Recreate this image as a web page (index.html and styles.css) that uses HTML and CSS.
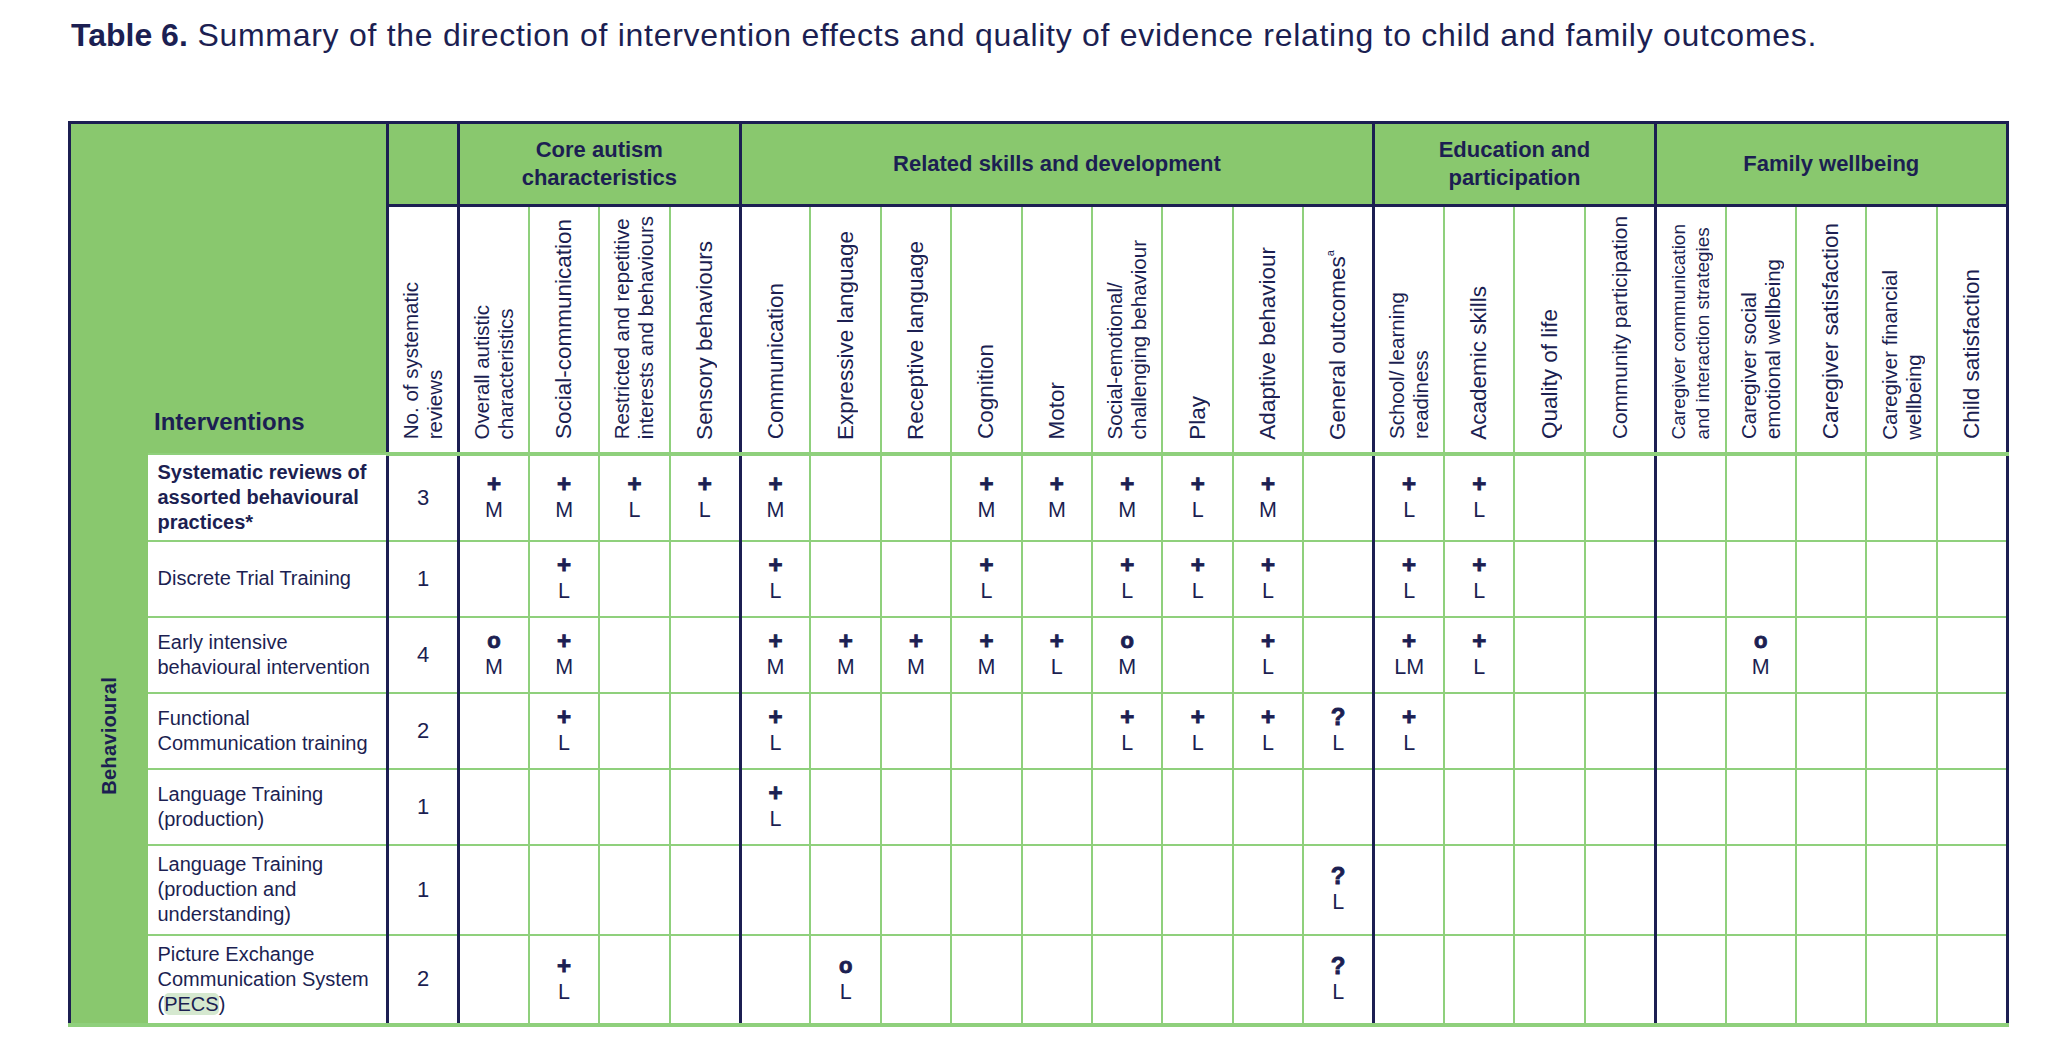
FILE: index.html
```html
<!DOCTYPE html>
<html lang="en">
<head>
<meta charset="utf-8">
<title>Table 6</title>
<link rel="stylesheet" href="styles.css">
</head>
<body>
<div class="page">
  <h1 class="title"><b>Table 6.</b> Summary of the direction of intervention effects and quality of evidence relating to child and family outcomes.</h1>

  <table class="summary">
    <colgroup>
      <col class="c-cat"><col class="c-name"><col class="c-no">
      <col class="c-d"><col class="c-d"><col class="c-d"><col class="c-d">
      <col class="c-d"><col class="c-d"><col class="c-d"><col class="c-d"><col class="c-d"><col class="c-d"><col class="c-d"><col class="c-d"><col class="c-d">
      <col class="c-d"><col class="c-d"><col class="c-d"><col class="c-d">
      <col class="c-d"><col class="c-d"><col class="c-d"><col class="c-d"><col class="c-d">
    </colgroup>
    <thead>
      <tr class="r-group">
        <th class="corner" rowspan="2" colspan="2"><span class="corner-label">Interventions</span></th>
        <th class="grp gl"></th>
        <th class="grp gl" colspan="4">Core autism<br>characteristics</th>
        <th class="grp gl" colspan="9">Related skills and development</th>
        <th class="grp gl" colspan="4">Education and<br>participation</th>
        <th class="grp gl" colspan="5">Family wellbeing</th>
      </tr>
      <tr class="r-cols">
        <th class="col gl"><div class="vh"><span class="vt two">No. of systematic<br>reviews</span></div></th>
        <th class="col gl"><div class="vh"><span class="vt two">Overall autistic<br>characteristics</span></div></th>
        <th class="col"><div class="vh"><span class="vt">Social-communication</span></div></th>
        <th class="col"><div class="vh"><span class="vt two">Restricted and repetitive<br>interests and behaviours</span></div></th>
        <th class="col"><div class="vh"><span class="vt">Sensory behaviours</span></div></th>
        <th class="col gl"><div class="vh"><span class="vt">Communication</span></div></th>
        <th class="col"><div class="vh"><span class="vt">Expressive language</span></div></th>
        <th class="col"><div class="vh"><span class="vt">Receptive language</span></div></th>
        <th class="col"><div class="vh"><span class="vt">Cognition</span></div></th>
        <th class="col"><div class="vh"><span class="vt">Motor</span></div></th>
        <th class="col"><div class="vh"><span class="vt two">Social-emotional/<br>challenging behaviour</span></div></th>
        <th class="col"><div class="vh"><span class="vt">Play</span></div></th>
        <th class="col"><div class="vh"><span class="vt">Adaptive behaviour</span></div></th>
        <th class="col"><div class="vh"><span class="vt">General outcomes<sup>a</sup></span></div></th>
        <th class="col gl"><div class="vh"><span class="vt two">School/ learning<br>readiness</span></div></th>
        <th class="col"><div class="vh"><span class="vt">Academic skills</span></div></th>
        <th class="col"><div class="vh"><span class="vt">Quality of life</span></div></th>
        <th class="col"><div class="vh"><span class="vt sm">Community participation</span></div></th>
        <th class="col gl"><div class="vh"><span class="vt two xs">Caregiver communication<br>and interaction strategies</span></div></th>
        <th class="col"><div class="vh"><span class="vt two">Caregiver social<br>emotional wellbeing</span></div></th>
        <th class="col"><div class="vh"><span class="vt">Caregiver satisfaction</span></div></th>
        <th class="col"><div class="vh"><span class="vt two">Caregiver financial<br>wellbeing</span></div></th>
        <th class="col"><div class="vh"><span class="vt">Child satisfaction</span></div></th>
      </tr>
    </thead>
    <tbody>
      <tr class="tall">
        <th class="cat" rowspan="7"><span class="cat-label">Behavioural</span></th>
        <th class="name strong">Systematic reviews of<br>assorted behavioural<br>practices*</th>
        <td class="no gl">3</td>
        <td class="gl"><span class="d">+</span><span class="q">M</span></td>
        <td><span class="d">+</span><span class="q">M</span></td>
        <td><span class="d">+</span><span class="q">L</span></td>
        <td><span class="d">+</span><span class="q">L</span></td>
        <td class="gl"><span class="d">+</span><span class="q">M</span></td>
        <td></td>
        <td></td>
        <td><span class="d">+</span><span class="q">M</span></td>
        <td><span class="d">+</span><span class="q">M</span></td>
        <td><span class="d">+</span><span class="q">M</span></td>
        <td><span class="d">+</span><span class="q">L</span></td>
        <td><span class="d">+</span><span class="q">M</span></td>
        <td></td>
        <td class="gl"><span class="d">+</span><span class="q">L</span></td>
        <td><span class="d">+</span><span class="q">L</span></td>
        <td></td>
        <td></td>
        <td class="gl"></td>
        <td></td>
        <td></td>
        <td></td>
        <td></td>
      </tr>
      <tr>
        <th class="name">Discrete Trial Training</th>
        <td class="no gl">1</td>
        <td class="gl"></td>
        <td><span class="d">+</span><span class="q">L</span></td>
        <td></td>
        <td></td>
        <td class="gl"><span class="d">+</span><span class="q">L</span></td>
        <td></td>
        <td></td>
        <td><span class="d">+</span><span class="q">L</span></td>
        <td></td>
        <td><span class="d">+</span><span class="q">L</span></td>
        <td><span class="d">+</span><span class="q">L</span></td>
        <td><span class="d">+</span><span class="q">L</span></td>
        <td></td>
        <td class="gl"><span class="d">+</span><span class="q">L</span></td>
        <td><span class="d">+</span><span class="q">L</span></td>
        <td></td>
        <td></td>
        <td class="gl"></td>
        <td></td>
        <td></td>
        <td></td>
        <td></td>
      </tr>
      <tr>
        <th class="name">Early intensive<br>behavioural intervention</th>
        <td class="no gl">4</td>
        <td class="gl"><span class="d o">o</span><span class="q">M</span></td>
        <td><span class="d">+</span><span class="q">M</span></td>
        <td></td>
        <td></td>
        <td class="gl"><span class="d">+</span><span class="q">M</span></td>
        <td><span class="d">+</span><span class="q">M</span></td>
        <td><span class="d">+</span><span class="q">M</span></td>
        <td><span class="d">+</span><span class="q">M</span></td>
        <td><span class="d">+</span><span class="q">L</span></td>
        <td><span class="d o">o</span><span class="q">M</span></td>
        <td></td>
        <td><span class="d">+</span><span class="q">L</span></td>
        <td></td>
        <td class="gl"><span class="d">+</span><span class="q">LM</span></td>
        <td><span class="d">+</span><span class="q">L</span></td>
        <td></td>
        <td></td>
        <td class="gl"></td>
        <td><span class="d o">o</span><span class="q">M</span></td>
        <td></td>
        <td></td>
        <td></td>
      </tr>
      <tr>
        <th class="name">Functional<br>Communication training</th>
        <td class="no gl">2</td>
        <td class="gl"></td>
        <td><span class="d">+</span><span class="q">L</span></td>
        <td></td>
        <td></td>
        <td class="gl"><span class="d">+</span><span class="q">L</span></td>
        <td></td>
        <td></td>
        <td></td>
        <td></td>
        <td><span class="d">+</span><span class="q">L</span></td>
        <td><span class="d">+</span><span class="q">L</span></td>
        <td><span class="d">+</span><span class="q">L</span></td>
        <td><span class="d">?</span><span class="q">L</span></td>
        <td class="gl"><span class="d">+</span><span class="q">L</span></td>
        <td></td>
        <td></td>
        <td></td>
        <td class="gl"></td>
        <td></td>
        <td></td>
        <td></td>
        <td></td>
      </tr>
      <tr>
        <th class="name">Language Training<br>(production)</th>
        <td class="no gl">1</td>
        <td class="gl"></td>
        <td></td>
        <td></td>
        <td></td>
        <td class="gl"><span class="d">+</span><span class="q">L</span></td>
        <td></td>
        <td></td>
        <td></td>
        <td></td>
        <td></td>
        <td></td>
        <td></td>
        <td></td>
        <td class="gl"></td>
        <td></td>
        <td></td>
        <td></td>
        <td class="gl"></td>
        <td></td>
        <td></td>
        <td></td>
        <td></td>
      </tr>
      <tr class="taller">
        <th class="name">Language Training<br>(production and<br>understanding)</th>
        <td class="no gl">1</td>
        <td class="gl"></td>
        <td></td>
        <td></td>
        <td></td>
        <td class="gl"></td>
        <td></td>
        <td></td>
        <td></td>
        <td></td>
        <td></td>
        <td></td>
        <td></td>
        <td><span class="d">?</span><span class="q">L</span></td>
        <td class="gl"></td>
        <td></td>
        <td></td>
        <td></td>
        <td class="gl"></td>
        <td></td>
        <td></td>
        <td></td>
        <td></td>
      </tr>
      <tr class="taller last">
        <th class="name">Picture Exchange<br>Communication System<br>(<span class="hl">PECS</span>)</th>
        <td class="no gl">2</td>
        <td class="gl"></td>
        <td><span class="d">+</span><span class="q">L</span></td>
        <td></td>
        <td></td>
        <td class="gl"></td>
        <td><span class="d o">o</span><span class="q">L</span></td>
        <td></td>
        <td></td>
        <td></td>
        <td></td>
        <td></td>
        <td></td>
        <td><span class="d">?</span><span class="q">L</span></td>
        <td class="gl"></td>
        <td></td>
        <td></td>
        <td></td>
        <td class="gl"></td>
        <td></td>
        <td></td>
        <td></td>
        <td></td>
      </tr>
    </tbody>
  </table>
</div>
</body>
</html>
```

FILE: styles.css
```css
* {
  box-sizing: border-box;
}

html,
body {
  margin: 0;
  padding: 0;
  background: #ffffff;
}

body {
  font-family: "Liberation Sans", Arial, sans-serif;
  color: #1c1f52;
}

th,
td {
  padding: 0;
  color: #1c1f52;
}

.page {
  padding: 16px 0 0 68px;
}

.title {
  margin: 0 0 67px 3px;
  font-size: 32px;
  line-height: 38px;
  font-weight: 400;
  letter-spacing: 0.72px;
  white-space: nowrap;
}

.title b {
  font-weight: 700;
  letter-spacing: 0;
}

/* ---------- table ---------- */

.summary {
  border-collapse: collapse;
  table-layout: fixed;
  width: 1937px;
  border-top: 3px solid #1c1f52;
  border-left: 3px solid #1c1f52;
  border-right: 3px solid #1c1f52;
  border-bottom: 4px solid #8fd07c;
}

.c-cat { width: 78px; }
.c-name { width: 240px; }
.c-no { width: 71px; }
.c-d { width: 70.4px; }

/* group header row */
.r-group {
  height: 83px;
}

.grp {
  background: #89c86e;
  border: 3px solid #1c1f52;
  font-size: 22px;
  line-height: 28px;
  font-weight: 700;
  text-align: center;
  vertical-align: middle;
}

.corner {
  background: #89c86e;
  border-bottom: none;
  text-align: left;
  vertical-align: bottom;
  padding: 0 0 16px 83px;
}

.corner-label {
  font-size: 24px;
  line-height: 30px;
  font-weight: 700;
}

/* rotated column headers */
.r-cols {
  height: 248px;
}

.col {
  background: #ffffff;
  border-left: 2px solid #8fd07c;
  border-right: 2px solid #8fd07c;
  border-top: 3px solid #1c1f52;
  border-bottom: 4px solid #8fd07c;
  vertical-align: bottom;
  padding-bottom: 12px;
}

.vh {
  height: 228px;
  display: flex;
  justify-content: center;
  align-items: flex-end;
}

.vt {
  writing-mode: vertical-rl;
  transform: rotate(180deg);
  font-size: 22.5px;
  line-height: 24px;
  font-weight: 400;
  white-space: nowrap;
  text-align: start;
}

.vt.sm {
  font-size: 20.8px;
}

.vt.two {
  font-size: 20.5px;
}

.vt.xs {
  font-size: 19px;
}

.vt sup {
  font-size: 11px;
  line-height: 0;
}

/* body */
.summary tbody tr {
  height: 76px;
}

.summary tbody tr.tall {
  height: 87px;
}

.summary tbody tr.taller {
  height: 90px;
}

.summary td {
  border: 2px solid #8fd07c;
  text-align: center;
  vertical-align: middle;
}

.summary .gl {
  border-left: 3px solid #1c1f52;
}

.cat {
  background: #89c86e;
  border-top: none;
  border-bottom: 4px solid #8fd07c;
  text-align: center;
  vertical-align: middle;
}

.cat-label {
  display: inline-block;
  writing-mode: vertical-rl;
  transform: rotate(180deg);
  font-size: 20px;
  line-height: 24px;
  font-weight: 700;
  letter-spacing: 0.3px;
}

.name {
  border: 2px solid #8fd07c;
  border-left: none;
  text-align: left;
  vertical-align: middle;
  padding: 5px 6px 5px 10px;
  font-size: 20px;
  line-height: 25px;
  font-weight: 400;
  white-space: nowrap;
}

.name.strong {
  font-weight: 700;
}

.hl {
  background: #d5e8cf;
  border-radius: 5px;
}

.summary .no {
  font-size: 22px;
}

.d {
  display: block;
  font-size: 24px;
  line-height: 26px;
  font-weight: 700;
  -webkit-text-stroke: 0.9px #1c1f52;
}

.d.o {
  font-size: 22px;
}

.q {
  display: block;
  font-size: 21.5px;
  line-height: 27px;
  font-weight: 400;
}

.last td,
.last th {
  border-bottom: 4px solid #8fd07c;
}
```
